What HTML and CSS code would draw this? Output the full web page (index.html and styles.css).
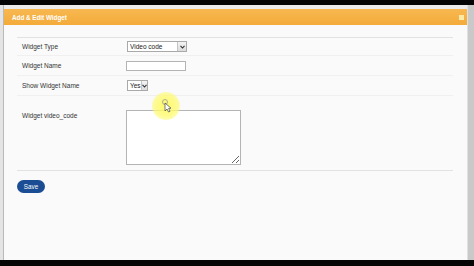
FILE: index.html
```html
<!DOCTYPE html>
<html lang="en">

<head>
    <meta charset="UTF-8">
    <meta name="viewport" content="width=device-width, initial-scale=1.0">
    <title>Add &amp; Edit Widget</title>
    <link rel="stylesheet" href="styles.css">
</head>

<body>
    <div class="screen">
        <div class="bar"></div>
        <div class="middle">
            <div class="edge-left"></div>
            <div class="dialog">
                <div class="dialog-head">
                    <span class="title">Add &amp; Edit Widget</span>
                    <span class="close"></span>
                </div>
                <div class="dialog-body">
                    <div class="form">
                        <div class="row first">
                            <label>Widget Type</label>
                            <div class="select wide">
                                <span class="value">Video code</span>
                                <span class="arrow"><svg width="5" height="4" viewBox="0 0 5 4"><path d="M0.5 0.8 L2.5 3 L4.5 0.8" fill="none" stroke="#333" stroke-width="1.1"/></svg></span>
                            </div>
                        </div>
                        <div class="row">
                            <label>Widget Name</label>
                            <input class="text" type="text">
                        </div>
                        <div class="row">
                            <label>Show Widget Name</label>
                            <div class="select small">
                                <span class="value">Yes</span>
                                <span class="arrow"><svg width="5" height="4" viewBox="0 0 5 4"><path d="M0.5 0.8 L2.5 3 L4.5 0.8" fill="none" stroke="#333" stroke-width="1.1"/></svg></span>
                            </div>
                        </div>
                        <div class="row tall">
                            <label>Widget video_code</label>
                            <textarea class="code"></textarea>
                        </div>
                    </div>
                    <button class="save">Save</button>
                </div>
            </div>
            <div class="edge-right"></div>
        </div>
        <div class="bar bottom"></div>
    </div>

    <div class="pointer">
        <svg width="10" height="14" viewBox="0 0 10 14">
            <circle cx="3" cy="3" r="2.5" fill="none" stroke="#999" stroke-width="0.8"/>
            <path d="M3 4 L3 12 L5 10 L6.5 13 L8 12.3 L6.6 9.4 L9 9.2 Z" fill="#fff" stroke="#444" stroke-width="0.7"/>
        </svg>
    </div>
</body>

</html>
```

FILE: styles.css
```css
html,
body {
    margin: 0;
    padding: 0;
    font-family: "Liberation Sans", Arial, sans-serif;
}

.screen {
    display: flex;
    flex-direction: column;
    height: 266px;
    width: 474px;
    background: #ececec;
}

.bar {
    height: 5px;
    background: #050505;
}

.bar.bottom {
    height: 6px;
}

.middle {
    flex: 1;
    display: flex;
}

.edge-left {
    width: 3px;
    background: #e4e4e4;
    border-right: 1px solid #b9b9b9;
}

.edge-right {
    width: 6px;
    background: #c9c9c9;
    border-left: 1px solid #e0e0e0;
}

.dialog {
    flex: 1;
    display: flex;
    flex-direction: column;
    margin-top: 4px;
    background: #fafafa;
}

.dialog-head {
    height: 16px;
    display: flex;
    align-items: center;
    justify-content: space-between;
    padding: 0 3px 0 8px;
    background: linear-gradient(#f8b850, #f3ab3a);
}

.title {
    color: #fff;
    font-size: 6.3px;
    font-weight: bold;
}

.close {
    width: 5px;
    height: 5px;
    background: #fbe9a8;
}

.dialog-body {
    flex: 1;
    padding: 12px 12px 0 13px;
}

.form {
    border-top: 1px solid #e2e2e2;
    border-bottom: 1px solid #e2e2e2;
    margin-right: 2px;
}

.row {
    display: flex;
    align-items: center;
    height: 19px;
    border-bottom: 1px solid #f0f0f0;
}

.row.first {
    height: 17px;
}

.row:last-child {
    border-bottom: none;
}

.row label {
    width: 104px;
    padding-left: 5px;
    font-size: 6.5px;
    color: #333;
}

.row.tall {
    height: 74px;
    align-items: flex-start;
}

.row.tall label {
    padding-top: 16px;
}

.select {
    display: flex;
    align-items: center;
    height: 9px;
    border: 1px solid #a9a9a9;
    background: #fff;
    font-size: 6.5px;
    color: #222;
}

.select .value {
    flex: 1;
    padding-left: 2px;
}

.select .arrow {
    width: 8px;
    height: 9px;
    display: flex;
    align-items: center;
    justify-content: center;
    background: linear-gradient(#f4f4f4, #dcdcdc);
    border-left: 1px solid #c4c4c4;
}

.select.wide {
    width: 58px;
    margin-left: 1px;
}

.select.small {
    width: 19px;
    margin-left: 1px;
}

.text {
    width: 58px;
    height: 8px;
    padding: 0;
    margin: 0;
    border: 1px solid #b4b4b4;
    background: #fff;
}

.code {
    width: 113px;
    height: 53px;
    padding: 0;
    margin: 14px 0 0 0;
    border: 1px solid #b4b4b4;
    background: #fff;
    resize: both;
}

.save {
    margin-top: 9px;
    width: 28px;
    height: 13px;
    padding: 0;
    border: none;
    border-radius: 7px;
    background: #1a4d93;
    color: #fff;
    font-family: "Liberation Sans", Arial, sans-serif;
    font-size: 6.3px;
}

.pointer {
    position: absolute;
    left: 152px;
    top: 92px;
    width: 28px;
    height: 28px;
    border-radius: 50%;
    background: radial-gradient(circle, rgba(255, 250, 90, 0.9) 0%, rgba(255, 250, 110, 0.75) 55%, rgba(255, 255, 160, 0) 100%);
}

.pointer svg {
    position: absolute;
    left: 10px;
    top: 7px;
}
```
